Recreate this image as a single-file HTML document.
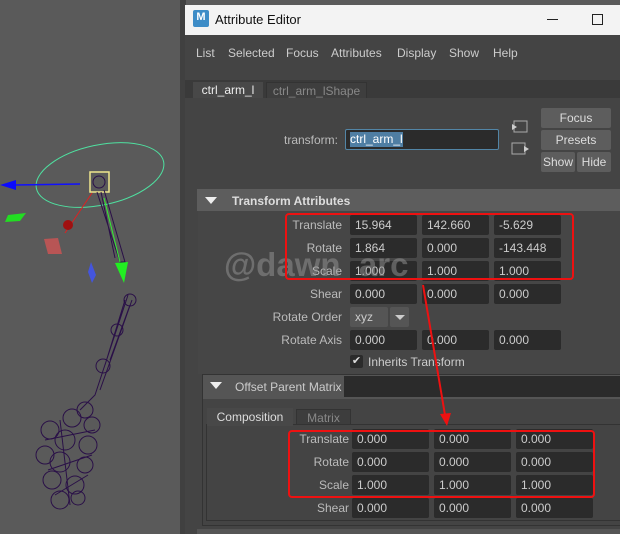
<!DOCTYPE html>
<html><head><style>
*{box-sizing:border-box;margin:0;padding:0}
body{width:620px;height:534px;overflow:hidden;background:#5a5a5a;position:relative;font-family:"Liberation Sans","DejaVu Sans",sans-serif;font-size:12px;color:#ccc}
.a{position:absolute}
.f{position:absolute;background:#2b2b2b;height:20px;border-radius:2px;color:#ccc;padding-left:5px;line-height:20px}
.l{position:absolute;text-align:right;color:#bbb;line-height:20px}
.b{position:absolute;background:#5d5d5d;color:#ddd;text-align:center;line-height:20px;border-radius:2px}
</style></head><body>
<svg class="a" style="left:0;top:0" width="185" height="534">
<ellipse cx="100" cy="175" rx="65" ry="30" transform="rotate(-12 100 175)" fill="none" stroke="#4fe0a0" stroke-width="1"/>
<line x1="80" y1="184" x2="15" y2="185" stroke="#1010ff" stroke-width="1.5"/>
<polygon points="0,185 16,180 16,190" fill="#0a0aff"/>
<polygon points="8,215 26,213 20,221 5,222" fill="#22dd22"/>
<polygon points="44,239 58,238 62,254 48,254" fill="#b85555"/>
<polygon points="91,262 96,275 92,283 88,272" fill="#4455dd"/>
<line x1="92" y1="193" x2="65" y2="233" stroke="#e02020"/>
<circle cx="68" cy="225" r="5" fill="#a01010"/>
<rect x="90" y="172" width="19" height="20" fill="none" stroke="#f0e68c" stroke-width="1.5"/>
<g stroke="#2a1048" fill="none" stroke-width="1">
<circle cx="99" cy="182" r="6"/>
<path d="M97 192 L120 262 L125 262 L104 190 M101 192 L115 258"/>
<path d="M128 295 L95 395 L90 400 M132 300 L100 390 M125 300 L105 365 M130 305 L110 360"/>
<circle cx="130" cy="300" r="6"/><circle cx="117" cy="330" r="6"/><circle cx="103" cy="366" r="7"/>
<path d="M90 400 L80 410"/>
<circle cx="85" cy="410" r="8"/><circle cx="72" cy="418" r="9"/><circle cx="92" cy="425" r="8"/>
<circle cx="50" cy="430" r="9"/><circle cx="65" cy="440" r="10"/><circle cx="88" cy="445" r="9"/>
<circle cx="45" cy="455" r="9"/><circle cx="60" cy="462" r="10"/><circle cx="85" cy="465" r="8"/>
<circle cx="52" cy="480" r="9"/><circle cx="75" cy="485" r="9"/><circle cx="60" cy="500" r="9"/><circle cx="78" cy="498" r="7"/>
<path d="M45 440 L95 430 M48 470 L92 455 M55 495 L88 475 M60 420 L70 505"/>
</g>
<line x1="104" y1="198" x2="120" y2="262" stroke="#33ee33"/>
<polygon points="115,263 128,262 124,283" fill="#22ee22"/>
</svg>
<div class="a" style="left:180px;top:0;width:6px;height:534px;background:#404040"></div>
<div class="a" style="left:185px;top:5px;width:435px;height:529px;background:#444"></div>
<div class="a" style="left:185px;top:5px;width:435px;height:30px;background:#f3f3f3"></div>
<div class="a" style="left:193px;top:10px;width:16px;height:17px;background:#3d8cc7;border-radius:2px;color:#fff;font-size:11px;font-weight:bold;text-align:center;line-height:14px">M</div>
<div class="a" style="left:215px;top:12px;color:#111;font-size:13px">Attribute Editor</div>
<div class="a" style="left:547px;top:19px;width:11px;height:1px;background:#222"></div>
<div class="a" style="left:592px;top:14px;width:11px;height:11px;border:1px solid #222"></div>
<div class="a" style="top:46px;left:0;color:#ccc">
<span class="a" style="left:196px">List</span><span class="a" style="left:228px">Selected</span><span class="a" style="left:286px">Focus</span><span class="a" style="left:331px">Attributes</span><span class="a" style="left:397px">Display</span><span class="a" style="left:449px">Show</span><span class="a" style="left:493px">Help</span></div>
<div class="a" style="left:185px;top:80px;width:435px;height:18px;background:#3a3a3a"></div>
<div class="a" style="left:193px;top:82px;width:70px;height:16px;background:#484848;color:#eee;text-align:center;line-height:16px">ctrl_arm_l</div>
<div class="a" style="left:266px;top:82px;width:101px;height:16px;background:#3e3e3e;color:#888;text-align:center;line-height:16px;border:1px solid #333;border-bottom:0">ctrl_arm_lShape</div>
<div class="l" style="left:260px;top:130px;width:78px">transform:</div>
<div class="a" style="left:345px;top:129px;width:154px;height:21px;background:#2b2b2b;border:1px solid #5285a6;border-radius:2px"><span style="background:#4f7ea3;color:#fff;margin:2px 0 0 4px;display:inline-block;line-height:15px">ctrl_arm_l</span></div>
<svg class="a" style="left:510px;top:118px" width="20" height="42"><rect x="4" y="3" width="13" height="11" fill="none" stroke="#aaa"/><polygon points="2,6 7,9 2,12" fill="#ccc"/><rect x="2" y="25" width="13" height="11" fill="none" stroke="#aaa"/><polygon points="14,28 19,31 14,34" fill="#ccc"/></svg>
<div class="b" style="left:541px;top:108px;width:70px">Focus</div>
<div class="b" style="left:541px;top:130px;width:70px">Presets</div>
<div class="b" style="left:541px;top:152px;width:34px">Show</div>
<div class="b" style="left:577px;top:152px;width:34px">Hide</div>
<div class="a" style="left:197px;top:189px;width:423px;height:22px;background:#5d5d5d"></div>
<div class="a" style="left:205px;top:197px;width:0;height:0;border-left:6px solid transparent;border-right:6px solid transparent;border-top:7px solid #eee"></div>
<div class="a" style="left:232px;top:194px;font-weight:bold;color:#ddd">Transform Attributes</div>
<div class="a" style="left:198px;top:211px;width:422px;height:163px;background:#464646"></div>
<div class="l" style="left:250px;top:215px;width:92px">Translate</div><div class="f" style="left:350px;top:215px;width:67px">15.964</div><div class="f" style="left:422px;top:215px;width:67px">142.660</div><div class="f" style="left:494px;top:215px;width:67px">-5.629</div>
<div class="l" style="left:250px;top:238px;width:92px">Rotate</div><div class="f" style="left:350px;top:238px;width:67px">1.864</div><div class="f" style="left:422px;top:238px;width:67px">0.000</div><div class="f" style="left:494px;top:238px;width:67px">-143.448</div>
<div class="l" style="left:250px;top:261px;width:92px">Scale</div><div class="f" style="left:350px;top:261px;width:67px">1.000</div><div class="f" style="left:422px;top:261px;width:67px">1.000</div><div class="f" style="left:494px;top:261px;width:67px">1.000</div>
<div class="l" style="left:250px;top:284px;width:92px">Shear</div><div class="f" style="left:350px;top:284px;width:67px">0.000</div><div class="f" style="left:422px;top:284px;width:67px">0.000</div><div class="f" style="left:494px;top:284px;width:67px">0.000</div>
<div class="l" style="left:250px;top:307px;width:92px">Rotate Order</div><div class="f" style="left:350px;top:307px;width:38px;background:#555">xyz</div><div class="a" style="left:390px;top:307px;width:19px;height:20px;background:#555;border-radius:2px"></div><div class="a" style="left:395px;top:315px;border-left:5px solid transparent;border-right:5px solid transparent;border-top:5px solid #ccc"></div>
<div class="l" style="left:250px;top:330px;width:92px">Rotate Axis</div><div class="f" style="left:350px;top:330px;width:67px">0.000</div><div class="f" style="left:422px;top:330px;width:67px">0.000</div><div class="f" style="left:494px;top:330px;width:67px">0.000</div>
<div class="a" style="left:350px;top:355px;width:13px;height:13px;background:#2b2b2b;border-radius:2px;color:#ddd;font-size:11px;line-height:13px;text-align:center">✔</div>
<div class="a" style="left:368px;top:355px;color:#ccc">Inherits Transform</div>
<div class="a" style="left:224px;top:246px;font-size:33px;font-weight:bold;color:rgba(150,150,150,.5)">@dawn_arc</div>
<div class="a" style="left:202px;top:374px;width:418px;height:152px;border:1px solid #333;border-right:0;background:#444"></div>
<div class="a" style="left:203px;top:375px;width:417px;height:24px;background:#555"></div>
<div class="a" style="left:210px;top:382px;border-left:6px solid transparent;border-right:6px solid transparent;border-top:7px solid #eee"></div>
<div class="a" style="left:235px;top:380px;color:#ccc">Offset Parent Matrix</div>
<div class="a" style="left:344px;top:376px;width:276px;height:21px;background:#2b2b2b"></div>
<div class="a" style="left:206px;top:424px;width:414px;height:97px;border:1px solid #333;border-right:0;background:#444"></div>
<div class="a" style="left:207px;top:408px;width:86px;height:18px;background:#484848;color:#ddd;text-align:center;line-height:18px">Composition</div>
<div class="a" style="left:296px;top:409px;width:55px;height:16px;background:#3d3d3d;color:#888;text-align:center;line-height:16px;border:1px solid #333">Matrix</div>
<div class="l" style="left:260px;top:429px;width:89px">Translate</div><div class="f" style="left:352px;top:429px;width:77px">0.000</div><div class="f" style="left:434px;top:429px;width:77px">0.000</div><div class="f" style="left:516px;top:429px;width:77px">0.000</div>
<div class="l" style="left:260px;top:452px;width:89px">Rotate</div><div class="f" style="left:352px;top:452px;width:77px">0.000</div><div class="f" style="left:434px;top:452px;width:77px">0.000</div><div class="f" style="left:516px;top:452px;width:77px">0.000</div>
<div class="l" style="left:260px;top:475px;width:89px">Scale</div><div class="f" style="left:352px;top:475px;width:77px">1.000</div><div class="f" style="left:434px;top:475px;width:77px">1.000</div><div class="f" style="left:516px;top:475px;width:77px">1.000</div>
<div class="l" style="left:260px;top:498px;width:89px">Shear</div><div class="f" style="left:352px;top:498px;width:77px">0.000</div><div class="f" style="left:434px;top:498px;width:77px">0.000</div><div class="f" style="left:516px;top:498px;width:77px">0.000</div>
<div class="a" style="left:197px;top:529px;width:423px;height:5px;background:#555"></div>
<svg class="a" style="left:0;top:0" width="620" height="534">
<rect x="286" y="214" width="287" height="65" rx="3" fill="none" stroke="#ee1111" stroke-width="2"/>
<rect x="289" y="431" width="305" height="66" rx="3" fill="none" stroke="#ee1111" stroke-width="2"/>
<line x1="423" y1="285" x2="445" y2="415" stroke="#ee1111" stroke-width="2"/>
<polygon points="440,414 451,413 447,426" fill="#ee1111"/>
</svg>
</body></html>
